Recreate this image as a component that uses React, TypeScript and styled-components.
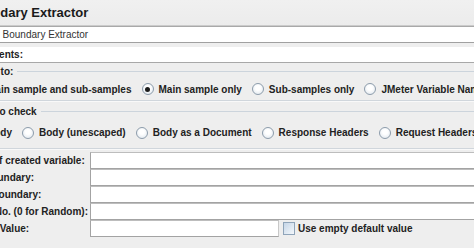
import React from "react";
import styled, { createGlobalStyle } from "styled-components";

const Global = createGlobalStyle`
  html, body { margin: 0; padding: 0; background: #eeeeee; overflow: hidden; }
  body { font-family: "Liberation Sans", Arial, sans-serif; }
`;

const Viewport = styled.div`
  width: 474px;
  height: 248px;
  overflow: hidden;
  background: #eeeeee;
`;

const Panel = styled.div`
  width: 660px;
  margin-left: -40px;
  display: flex;
  flex-direction: column;
  font-family: "Liberation Sans", Arial, sans-serif;
  font-size: 10px;
  color: #222;
`;

const Header = styled.div`
  height: 26px;
  box-sizing: border-box;
  padding-left: 7px;
  line-height: 25px;
  font-size: 13px;
  font-weight: bold;
  color: #1a1a1a;
  border-bottom: 1px solid #cbcbcb;
  background: linear-gradient(#f0f0f0, #ececec);
`;

const NameRow = styled.div`
  display: flex;
  align-items: center;
  height: 17px;
`;

const RowLabel = styled.span<{ $pl: number }>`
  font-weight: bold;
  padding-left: ${(p) => p.$pl}px;
  white-space: nowrap;
`;

const NameField = styled.div`
  flex: 1;
  height: 17px;
  box-sizing: border-box;
  margin-left: 2px;
  background: #fff;
  border-top: 1px solid #a9a9a9;
  border-bottom: 1px solid #a0a0a0;
  padding-left: 4px;
  display: flex;
  align-items: center;
  color: #333;
`;

const CommentsRow = styled.div`
  display: flex;
  align-items: center;
  height: 16px;
  box-sizing: border-box;
  margin-top: 4px;
  background: #fff;
  border-bottom: 1px solid #a8a8a8;
`;

const Group = styled.div<{ $mt: number; $pb: number }>`
  margin-top: ${(p) => p.$mt}px;
  padding-bottom: ${(p) => p.$pb}px;
  border-bottom: 1px solid #d0d6dc;
  box-shadow: 0 1px 0 #f9f9f9;
`;

const GroupTitle = styled.div`
  height: 16px;
  display: flex;
  align-items: center;
  padding-left: 10px;
  font-weight: bold;
  white-space: nowrap;
  &::after {
    content: "";
    flex: 1;
    height: 1px;
    margin-left: 4px;
    background: #ccd4dc;
  }
`;

const RadioRow = styled.div<{ $pt: number; $h: number }>`
  display: flex;
  align-items: center;
  height: ${(p) => p.$h}px;
  margin-top: ${(p) => p.$pt}px;
  padding-left: 10px;
  gap: 10px;
  white-space: nowrap;
`;

const RadioItem = styled.label`
  display: flex;
  align-items: center;
  gap: 5px;
  font-weight: bold;
`;

const RadioCircle = styled.span<{ $on?: boolean }>`
  width: 12px;
  height: 12px;
  box-sizing: border-box;
  border-radius: 50%;
  border: 1px solid #8d9cab;
  background: radial-gradient(circle at 50% 40%, #ffffff 30%, #dbe3eb 100%);
  display: flex;
  align-items: center;
  justify-content: center;
  flex: none;
  &::after {
    content: "";
    display: ${(p) => (p.$on ? "block" : "none")};
    width: 5px;
    height: 5px;
    border-radius: 50%;
    background: #1c1c1c;
  }
`;

const FieldGrid = styled.div`
  display: grid;
  grid-template-columns: 127px 1fr;
  grid-auto-rows: 17px;
  margin-top: 3px;
  padding-left: 3px;
`;

const FieldLabel = styled.span`
  font-weight: bold;
  align-self: center;
  white-space: nowrap;
`;

const TextField = styled.div<{ $w?: number }>`
  height: 17px;
  box-sizing: border-box;
  background: #fff;
  border: 1px solid;
  border-color: #bdbdbd #c8c8c8 #a3a3a3 #a3a3a3;
  ${(p) => (p.$w ? `width: ${p.$w}px; flex: none;` : "")}
`;

const LastCell = styled.div`
  display: flex;
  align-items: center;
`;

const CheckBox = styled.span`
  width: 12px;
  height: 13px;
  box-sizing: border-box;
  margin-left: 4px;
  border: 1px solid #8fa4b9;
  background: linear-gradient(135deg, #c6d6e7, #f3f7fb);
  flex: none;
`;

const CheckLabel = styled.span`
  margin-left: 3px;
  font-weight: bold;
  white-space: nowrap;
`;

const applyTo = [
  { label: "Main sample and sub-samples", on: false },
  { label: "Main sample only", on: true },
  { label: "Sub-samples only", on: false },
  { label: "JMeter Variable Name to use", on: false },
];

const fieldToCheck = [
  "Body",
  "Body (unescaped)",
  "Body as a Document",
  "Response Headers",
  "Request Headers",
  "URL",
  "Response Code",
];

const fields = [
  "Name of created variable:",
  "Left Boundary:",
  "Right Boundary:",
  "Match No. (0 for Random):",
];

export default function App() {
  return (
    <>
      <Global />
      <Viewport>
        <Panel>
          <Header>Boundary Extractor</Header>
          <NameRow>
            <RowLabel $pl={6}>Name:</RowLabel>
            <NameField>Boundary Extractor</NameField>
          </NameRow>
          <CommentsRow>
            <RowLabel $pl={8}>Comments:</RowLabel>
          </CommentsRow>
          <Group $mt={0} $pb={1}>
            <GroupTitle>Apply to:</GroupTitle>
            <RadioRow $pt={0} $h={20}>
              {applyTo.map((r) => (
                <RadioItem key={r.label}>
                  <RadioCircle $on={r.on} />
                  {r.label}
                </RadioItem>
              ))}
            </RadioRow>
          </Group>
          <Group $mt={2} $pb={6}>
            <GroupTitle>Field to check</GroupTitle>
            <RadioRow $pt={4} $h={19}>
              {fieldToCheck.map((l, i) => (
                <RadioItem key={l}>
                  <RadioCircle $on={i === 0} />
                  {l}
                </RadioItem>
              ))}
            </RadioRow>
          </Group>
          <FieldGrid>
            {fields.map((f) => (
              <React.Fragment key={f}>
                <FieldLabel>{f}</FieldLabel>
                <TextField />
              </React.Fragment>
            ))}
            <FieldLabel>Default Value:</FieldLabel>
            <LastCell>
              <TextField $w={189} />
              <CheckBox />
              <CheckLabel>Use empty default value</CheckLabel>
            </LastCell>
          </FieldGrid>
        </Panel>
      </Viewport>
    </>
  );
}
